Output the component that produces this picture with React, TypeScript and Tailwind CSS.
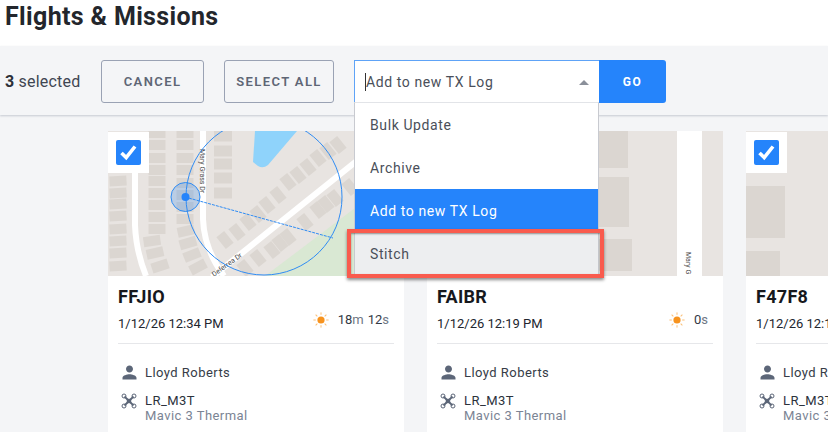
const HOUSE = "#dbd6d1";

const leftCol = [50, 62, 73, 85, 98, 110, 122, 135];
const midA = [2, 14, 27, 39, 50, 62, 74, 86, 98];
const midB = [2, 14, 27, 39, 52, 64, 76, 88];
const bendA = [
  [44, 110, -8],
  [47, 122, -12],
  [52, 135, -18],
];
const bendB = [
  [78, 100, -12],
  [80, 112, -16],
  [84, 124, -22],
  [90, 136, -28],
];
const rightCol = [5, 20, 33, 47, 62];
const diagAbove = [
  [117, 109],
  [129, 101],
  [140, 91],
  [150, 83],
  [159, 74],
  [170, 64],
  [180, 51],
  [190, 44],
  [200, 36],
  [210, 27],
  [220, 20],
  [230, 14],
];
const diagBelow = [
  [137, 137],
  [150, 127],
  [164, 119],
  [172, 112],
  [180, 106],
  [197, 91],
  [210, 79],
  [218, 73],
  [227, 67],
  [242, 56],
];

function House({ cx, cy, w, h, r }: { cx: number; cy: number; w: number; h: number; r: number }) {
  return <rect x={cx - w / 2} y={cy - h / 2} width={w} height={h} fill={HOUSE} transform={`rotate(${r} ${cx} ${cy})`} />;
}

function MapOne() {
  return (
    <svg width="296" height="145" viewBox="0 0 296 145" className="block">
      <g className="blur-[0.4px]">
        <rect width="296" height="145" fill="#e8e4e1" />
        <polygon points="296,40 157,145 296,145" fill="#d9e8d3" />
        <path d="M147 0 L189 0 L160 34 Q155 38 150 35 L145 31 Z" fill="#8fd3fb" />
        <path d="M27 30 V94 Q28 120 38 145" stroke="#fff" strokeWidth="6" fill="none" />
        <path d="M95 0 V88 Q96 118 116 145" stroke="#fff" strokeWidth="6" fill="none" />
        <path d="M296 -8 L104 146" stroke="#fff" strokeWidth="6" fill="none" />
        {leftCol.map((y) => (
          <House key={y} cx={10} cy={y} w={17} h={10} r={-3} />
        ))}
        {midA.map((y) => (
          <House key={y} cx={49} cy={y} w={17} h={10} r={0} />
        ))}
        {midB.map((y) => (
          <House key={y} cx={77} cy={y} w={17} h={10} r={0} />
        ))}
        {bendA.map(([x, y, r]) => (
          <House key={y} cx={x} cy={y} w={17} h={10} r={r} />
        ))}
        {bendB.map(([x, y, r]) => (
          <House key={y} cx={x} cy={y} w={17} h={10} r={r} />
        ))}
        {rightCol.map((y) => (
          <House key={y} cx={115} cy={y} w={18} h={11} r={0} />
        ))}
        {diagAbove.map(([x, y]) => (
          <House key={x} cx={x} cy={y} w={10} h={15} r={-39} />
        ))}
        {diagBelow.map(([x, y]) => (
          <House key={x} cx={x} cy={y} w={10} h={15} r={-39} />
        ))}
      </g>
      <text x="92" y="18" fontSize="7" fill="#4d4d4d" fontFamily="Roboto, sans-serif" transform="rotate(90 92 18)">
        Mary Grass Dr
      </text>
      <text x="106" y="146" fontSize="7" fill="#4d4d4d" fontFamily="Roboto, sans-serif" transform="rotate(-36 106 146)">
        Deferrea Dr
      </text>
      <circle cx="156" cy="66" r="78" fill="none" stroke="#2f8cf4" strokeWidth="1" />
      <line x1="77" y1="66" x2="225" y2="107" stroke="#2f8cf4" strokeWidth="1" strokeDasharray="3 1" />
      <circle cx="77.5" cy="66" r="14.5" fill="#2f86f0" fillOpacity="0.25" stroke="#2f8cf4" strokeWidth="1" />
      <circle cx="77.5" cy="66" r="4" fill="#2584fb" />
    </svg>
  );
}

function MapTwo() {
  return (
    <svg width="296" height="145" viewBox="0 0 296 145" className="block">
      <rect width="296" height="145" fill="#e8e4e1" />
      <rect x="160" y="0" width="41" height="37" fill={HOUSE} />
      <rect x="160" y="46" width="42" height="50" fill={HOUSE} />
      <rect x="160" y="108" width="45" height="32" fill={HOUSE} />
      <rect x="250" y="0" width="25" height="145" fill="#fff" />
      <text x="259" y="121" fontSize="7" fill="#4d4d4d" fontFamily="Roboto, sans-serif" transform="rotate(90 259 121)">
        Mary G
      </text>
    </svg>
  );
}

function MapThree() {
  return (
    <svg width="296" height="145" viewBox="0 0 296 145" className="block">
      <rect width="296" height="145" fill="#e8e4e1" />
      <rect x="0" y="55" width="39" height="52" fill={HOUSE} />
      <rect x="0" y="120" width="34" height="25" fill={HOUSE} />
    </svg>
  );
}

function CheckBadge() {
  return (
    <div className="absolute top-px left-0 flex h-[41px] w-[41px] items-center justify-center bg-white">
      <div className="flex h-[25px] w-[25px] items-center justify-center rounded-[2px] bg-[#2584fb]">
        <svg width="21" height="21" viewBox="0 0 21 21">
          <path d="M3.5 11 L8.2 15.5 L17 4.5" fill="none" stroke="#fff" strokeWidth="3.6" />
        </svg>
      </div>
    </div>
  );
}

function Sun() {
  const rays = [0, 45, 90, 135, 180, 225, 270, 315];
  return (
    <svg width="16" height="16" viewBox="0 0 16 16">
      <circle cx="8" cy="8" r="3.6" fill="#f7931e" />
      {rays.map((a) => (
        <line key={a} x1="8" y1="2.8" x2="8" y2="0.4" stroke="#fbbf77" strokeWidth="1" transform={`rotate(${a} 8 8)`} />
      ))}
    </svg>
  );
}

function PersonIcon() {
  return (
    <svg width="21" height="21" viewBox="0 0 24 24" fill="#5c6678">
      <path d="M12 12c2.21 0 4-1.79 4-4s-1.79-4-4-4-4 1.79-4 4 1.79 4 4 4zm0 2c-2.67 0-8 1.34-8 4v2h16v-2c0-2.66-5.33-4-8-4z" />
    </svg>
  );
}

function DroneIcon() {
  return (
    <svg width="16" height="16" viewBox="0 0 16 16" fill="none" stroke="#5c6678">
      <path d="M3.5 3.5 L12.5 12.5 M12.5 3.5 L3.5 12.5" strokeWidth="1.8" />
      <rect x="5.8" y="5.8" width="4.4" height="4.4" fill="#5c6678" stroke="none" />
      <circle cx="3" cy="3" r="2" strokeWidth="1" />
      <circle cx="13" cy="3" r="2" strokeWidth="1" />
      <circle cx="3" cy="13" r="2" strokeWidth="1" />
      <circle cx="13" cy="13" r="2" strokeWidth="1" />
    </svg>
  );
}

function Duration({ value }: { value: [string, string][] }) {
  return (
    <div className="flex gap-[4px] text-[13px] text-[#333a46]">
      {value.map(([n, u]) => (
        <span key={u}>
          {n}
          <span className="text-[#6f7785]">{u}</span>
        </span>
      ))}
    </div>
  );
}

function FlightCard({
  id,
  date,
  duration,
  map,
}: {
  id: string;
  date: string;
  duration: [string, string][];
  map: React.ReactNode;
}) {
  return (
    <div className="h-[320px] w-[296px] shrink-0 bg-white">
      <div className="relative h-[145px] overflow-hidden">
        {map}
        <CheckBadge />
      </div>
      <div className="px-[10px]">
        <div className="mt-[10px] text-[18px] leading-[22px] font-bold tracking-[0.3px] text-[#16181d]">{id}</div>
        <div className="flex h-[26px] items-center justify-between pr-[5px]">
          <span className="pt-[6px] text-[13px] text-[#22262e]">{date}</span>
          <div className="flex items-center gap-[9px] pb-[2px]">
            <Sun />
            <Duration value={duration} />
          </div>
        </div>
        <div className="mt-[9px] h-px bg-[#e6e7ea]" />
        <div className="mt-[18px] flex items-center gap-[5px] pl-[1px]">
          <PersonIcon />
          <span className="text-[13px] leading-[18px] tracking-[0.45px] text-[#363c47] [font-weight:450]">
            Lloyd Roberts
          </span>
        </div>
        <div className="mt-[7px] flex items-start gap-[8px] pl-[3px]">
          <div className="pt-[3px]">
            <DroneIcon />
          </div>
          <div className="pt-[3px] text-[13px] leading-[15px] tracking-[0.45px]">
            <div className="text-[#2c323c]">LR_M3T</div>
            <div className="text-[#7b8494]">Mavic 3 Thermal</div>
          </div>
        </div>
      </div>
    </div>
  );
}

function OutlineButton({ label, className }: { label: string; className: string }) {
  return (
    <button
      className={`h-[43px] rounded-[3px] border border-[#9aa2b4] text-[13px] font-semibold tracking-[1.4px] text-[#5e6675] ${className}`}
    >
      {label}
    </button>
  );
}

function MenuItem({ label, active }: { label: string; active?: boolean }) {
  return (
    <div
      className={`flex h-[43px] items-center px-[15px] pt-[2px] text-[14px] tracking-[0.6px] ${
        active ? "bg-[#2584fb] text-white" : "text-[#4a4f59]"
      }`}
    >
      {label}
    </div>
  );
}

export default function App() {
  return (
    <div className="h-[432px] w-[828px] overflow-hidden bg-[#f4f5f7] font-['Roboto',sans-serif]">
      <div className="h-[46px] bg-white pt-[2px] pl-[5px] text-[25px] leading-[30px] font-bold tracking-[0.35px] text-[#23262c]">
        Flights &amp; Missions
      </div>

      <div className="relative z-10 flex h-[69px] items-start bg-[#f4f5f7] pt-[14px] pl-[5px] shadow-[0_1px_2px_rgba(90,100,125,0.3)]">
        <div className="flex h-[43px] w-[96px] items-center text-[16px] tracking-[0.2px] text-[#3f4652]">
          <span>
            <span className="font-bold text-[#2c3038]">3</span> selected
          </span>
        </div>
        <OutlineButton label="CANCEL" className="w-[103px]" />
        <OutlineButton label="SELECT ALL" className="ml-[20px] w-[110px]" />

        <div className="relative ml-[20px] flex">
          <div className="flex h-[43px] w-[245px] items-center justify-between border-t border-l border-[#5ea3f7] bg-white pr-[10px] pl-[10px] text-[14px] tracking-[0.6px] text-[#4a4f59]">
            <span className="border-l border-[#333] leading-[18px]">Add to new TX Log</span>
            <span className="h-0 w-0 border-x-[5px] border-b-[5px] border-x-transparent border-b-[#8b909a]" />
          </div>
          <button className="h-[43px] w-[67px] rounded-r-[3px] bg-[#2584fb] text-[12px] font-bold tracking-[1.6px] text-white">
            GO
          </button>

          <div className="absolute top-[42px] left-0 z-20 w-[245px] border-t border-r border-l border-t-[#e2e4e8] border-r-[#c8cad0] border-l-[#c8cad0] bg-white">
            <MenuItem label="Bulk Update" />
            <MenuItem label="Archive" />
            <MenuItem label="Add to new TX Log" active />
            <div className="relative bg-[#edeef0]">
              <MenuItem label="Stitch" />
              <div className="absolute -top-[3px] -right-[6px] -bottom-[3px] -left-[8px] border-[4px] border-[#f95b4e] shadow-[0_2px_3px_rgba(0,0,0,0.45),inset_0_1px_2px_rgba(0,0,0,0.4)]" />
            </div>
          </div>
        </div>
      </div>

      <div className="flex gap-[23px] pt-[16px] pl-[108px]">
        <FlightCard id="FFJIO" date="1/12/26 12:34 PM" duration={[["18", "m"], ["12", "s"]]} map={<MapOne />} />
        <FlightCard id="FAIBR" date="1/12/26 12:19 PM" duration={[["0", "s"]]} map={<MapTwo />} />
        <FlightCard id="F47F8" date="1/12/26 12:19 PM" duration={[["0", "s"]]} map={<MapThree />} />
      </div>
    </div>
  );
}
